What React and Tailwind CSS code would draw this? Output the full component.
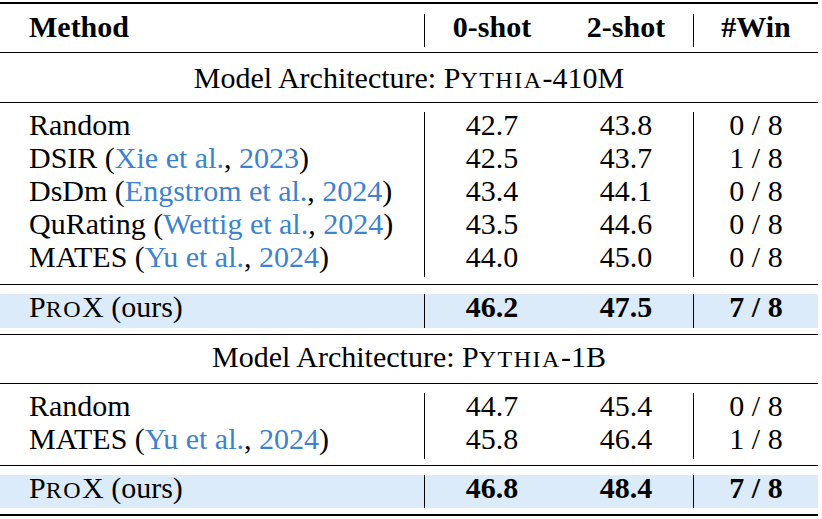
import React from "react";

const Cite = ({ children }) => <span className="text-[#3d82cf]">{children}</span>;

// LaTeX-style small caps: uppercase letters at a reduced size, slightly spaced
const Sc = ({ children }) => <span className="text-[24px] tracking-[1.5px]">{children}</span>;

// one table row: method | 0-shot 2-shot | #Win
const Row = ({ method, zero, two, win, bold, band, tall }) => (
  <div
    className={`flex leading-[26px] ${tall ? "h-[34px]" : "h-[33px]"} ${band ? "bg-[#dbebfa]" : ""} ${bold ? "font-bold" : ""}`}
  >
    <div className="w-[424px] pl-[29px] whitespace-nowrap font-normal">{method}</div>
    <div className="w-[269px] flex border-l border-black">
      <div className="w-[134px] text-center">{zero}</div>
      <div className="w-[134px] text-center">{two}</div>
    </div>
    <div className="w-[125px] border-l border-black text-center">{win}</div>
  </div>
);

const Rule = ({ className }) => <div className={`bg-black ${className}`} />;

const prox = (
  <>
    P<Sc>RO</Sc>X (ours)
  </>
);

const Section = ({ size, className }) => (
  <div className={`h-[33px] leading-[26px] text-center whitespace-nowrap ${className}`}>
    Model Architecture: P<Sc>YTHIA</Sc>-{size}
  </div>
);

const App = () => {
  return (
    <div className="w-[822px] h-[519px] bg-white text-black text-[30px] font-['Liberation_Serif','Times_New_Roman',serif]">
      <div className="w-[818px] pt-[2px]">
        {/* top rule */}
        <Rule className="h-[2px]" />

        {/* Header */}
        <div className="mt-[10px] flex h-[33px] leading-[26px] font-bold">
          <div className="w-[424px] pl-[29px]">Method</div>
          <div className="w-[269px] flex border-l border-black">
            <div className="w-[134px] text-center">0-shot</div>
            <div className="w-[134px] text-center">2-shot</div>
          </div>
          <div className="w-[125px] border-l border-black text-center">#Win</div>
        </div>
        <Rule className="h-px mt-[5px]" />

        {/* Pythia-410M */}
        <Section size="410M" className="mt-[12px]" />
        <Rule className="h-px mt-[4px]" />

        <div className="mt-[9px]">
          <Row method="Random" zero="42.7" two="43.8" win="0 / 8" />
          <Row
            method={<>DSIR (<Cite>Xie et al.</Cite>, <Cite>2023</Cite>)</>}
            zero="42.5"
            two="43.7"
            win="1 / 8"
          />
          <Row
            method={<>DsDm (<Cite>Engstrom et al.</Cite>, <Cite>2024</Cite>)</>}
            zero="43.4"
            two="44.1"
            win="0 / 8"
          />
          <Row
            method={<>QuRating (<Cite>Wettig et al.</Cite>, <Cite>2024</Cite>)</>}
            zero="43.5"
            two="44.6"
            win="0 / 8"
          />
          <Row
            method={<>MATES (<Cite>Yu et al.</Cite>, <Cite>2024</Cite>)</>}
            zero="44.0"
            two="45.0"
            win="0 / 8"
          />
        </div>
        <Rule className="h-px mt-[7px]" />

        <div className="mt-[9px]">
          <Row method={prox} zero="46.2" two="47.5" win="7 / 8" bold band tall />
        </div>
        <Rule className="h-px mt-[6px]" />

        {/* Pythia-1B */}
        <Section size="1B" className="mt-[9px]" />
        <Rule className="h-px mt-[6px]" />

        <div className="mt-[9px]">
          <Row method="Random" zero="44.7" two="45.4" win="0 / 8" />
          <Row
            method={<>MATES (<Cite>Yu et al.</Cite>, <Cite>2024</Cite>)</>}
            zero="45.8"
            two="46.4"
            win="1 / 8"
          />
        </div>
        <Rule className="h-px mt-[6px]" />

        <div className="mt-[9px]">
          <Row method={prox} zero="46.8" two="48.4" win="7 / 8" bold band />
        </div>

        {/* bottom rule */}
        <Rule className="h-[2px] mt-[6px]" />
      </div>
    </div>
  );
};

export default App;
